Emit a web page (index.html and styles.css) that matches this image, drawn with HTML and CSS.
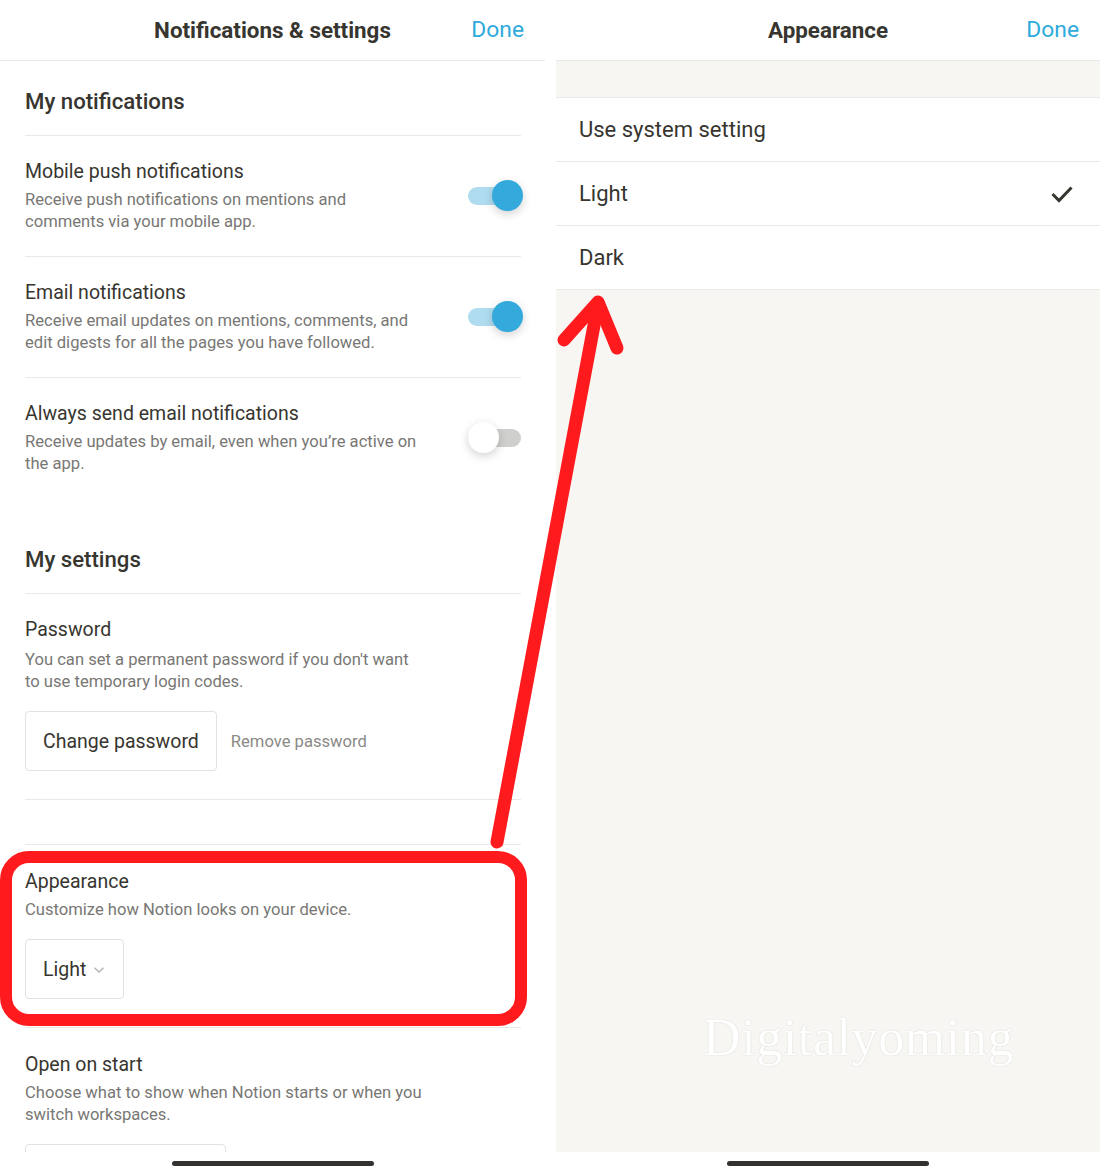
FILE: index.html
```html
<!DOCTYPE html>
<html lang="en">
<head>
<meta charset="utf-8">
<title>Notion settings</title>
<link rel="stylesheet" href="styles.css">
</head>
<body>
<div class="page">
  <section class="panel panel-left">
    <header class="bar">
      <div class="bar-title">Notifications &amp; settings</div>
      <div class="bar-done">Done</div>
    </header>
    <div class="content">
      <h2 class="group-head">My notifications</h2>
      <div class="item row">
        <div class="item-text">
          <div class="item-title">Mobile push notifications</div>
          <div class="item-desc">Receive push notifications on mentions and<br>comments via your mobile app.</div>
        </div>
        <div class="toggle on"><span class="knob"></span></div>
      </div>
      <div class="item row">
        <div class="item-text">
          <div class="item-title">Email notifications</div>
          <div class="item-desc">Receive email updates on mentions, comments, and<br>edit digests for all the pages you have followed.</div>
        </div>
        <div class="toggle on"><span class="knob"></span></div>
      </div>
      <div class="item row item-last">
        <div class="item-text">
          <div class="item-title">Always send email notifications</div>
          <div class="item-desc">Receive updates by email, even when you’re active on<br>the app.</div>
        </div>
        <div class="toggle off"><span class="knob"></span></div>
      </div>
      <h2 class="group-head">My settings</h2>
      <div class="item item-pw">
        <div class="item-title">Password</div>
        <div class="item-desc desc-pw">You can set a permanent password if you don't want<br>to use temporary login codes.</div>
        <div class="actions">
          <div class="btn">Change password</div>
          <div class="link">Remove password</div>
        </div>
      </div>
      <div class="item item-empty"></div>
      <div class="item item-ap">
        <div class="item-title">Appearance</div>
        <div class="item-desc">Customize how Notion looks on your device.</div>
        <div class="actions">
          <div class="btn btn-select">Light <svg class="chev" width="12" height="8" viewBox="0 0 12 8"><path d="M1.5 1.8 L6 6 L10.5 1.8" fill="none" stroke="#b4b4b0" stroke-width="1.4"/></svg></div>
        </div>
      </div>
      <div class="item item-open">
        <div class="item-title">Open on start</div>
        <div class="item-desc">Choose what to show when Notion starts or when you<br>switch workspaces.</div>
        <div class="actions">
          <div class="btn btn-wide"></div>
        </div>
      </div>
    </div>
    <div class="home"><span class="home-bar"></span></div>
  </section>

  <section class="panel panel-right">
    <header class="bar">
      <div class="bar-title">Appearance</div>
      <div class="bar-done">Done</div>
    </header>
    <div class="content content-grey">
      <div class="spacer"></div>
      <ul class="options">
        <li class="option">Use system setting</li>
        <li class="option">Light <svg class="check" width="24" height="20" viewBox="0 0 24 20"><path d="M2.5 10 L9 16.5 L21.5 3.5" fill="none" stroke="#37352f" stroke-width="3"/></svg></li>
        <li class="option">Dark</li>
      </ul>
      <div class="watermark">Digitalyoming</div>
    </div>
    <div class="home"><span class="home-bar"></span></div>
  </section>

  <svg class="annot" width="1100" height="1175" viewBox="0 0 1100 1175">
    <rect x="6" y="857" width="515" height="163" rx="23" ry="23" fill="none" stroke="#ff1a1d" stroke-width="12"/>
    <path d="M497 842 L598 304" fill="none" stroke="#ff1a1d" stroke-width="13" stroke-linecap="round"/>
    <path d="M564 340 L598 302 L617 348" fill="none" stroke="#ff1a1d" stroke-width="13" stroke-linecap="round" stroke-linejoin="round"/>
  </svg>
</div>
</body>
</html>
```

FILE: styles.css
```css
* { box-sizing: border-box; }
html, body { margin: 0; padding: 0; background: #fff; }
body {
  font-family: Roboto, "Noto Sans", "Liberation Sans", sans-serif;
  color: #37352f;
  width: 1100px;
  height: 1175px;
  overflow: hidden;
}
.page {
  position: relative;
  display: flex;
  gap: 11px;
  width: 1100px;
  height: 1175px;
}
.panel {
  display: flex;
  flex-direction: column;
  height: 1175px;
  background: #fff;
}
.panel-left { width: 545px; }
.panel-right { width: 544px; }

.bar {
  height: 61px;
  flex: none;
  display: flex;
  align-items: center;
  justify-content: center;
  position: relative;
  border-bottom: 1px solid #e9e9e7;
}
.bar-title {
  font-size: 22.4px;
  font-weight: 700;
  color: #37352f;
}
.bar-done {
  position: absolute;
  right: 21px;
  top: 16px;
  font-size: 22.8px;
  color: #2eaadc;
}
.content {
  flex: 1;
  overflow: hidden;
  padding: 0 24px 0 25px;
}
.group-head {
  margin: 0;
  padding: 27px 0 21px;
  font-size: 22.2px;
  line-height: 26px;
  font-weight: 500;
  border-bottom: 1px solid #e9e9e7;
}
.item {
  padding: 24px 0 23px;
  border-bottom: 1px solid #e9e9e7;
}
.row {
  display: flex;
  align-items: center;
  justify-content: space-between;
}
.item-last { border-bottom: none; padding-bottom: 44px; }
.item-title {
  font-size: 19.5px;
  line-height: 24px;
  color: #37352f;
}
.item-desc {
  margin-top: 5px;
  font-size: 16.6px;
  line-height: 22px;
  color: #787774;
}
.desc-pw { margin-top: 7px; }

.toggle {
  position: relative;
  flex: none;
  width: 53px;
  height: 18px;
  border-radius: 9px;
  margin-top: -2px;
}
.toggle.on { background: #afdcef; }
.toggle.off { background: #cfcfcd; }
.knob {
  position: absolute;
  top: 50%;
  width: 31px;
  height: 31px;
  margin-top: -15.5px;
  border-radius: 50%;
  box-shadow: 0 3px 10px rgba(0,0,0,0.18);
}
.toggle.on .knob { right: -2px; background: #34a9dc; }
.toggle.off .knob { left: 0; background: #fff; }

.actions {
  display: flex;
  align-items: center;
  gap: 14px;
  margin-top: 18px;
}
.btn {
  height: 60px;
  display: flex;
  align-items: center;
  padding: 0 17px;
  border: 1px solid #e3e2e0;
  border-radius: 4px;
  font-size: 19.5px;
  color: #37352f;
}
.link { font-size: 16.6px; color: #8a8986; }
.item-pw { padding-bottom: 28px; }
.item-empty { padding: 0; height: 45px; }
.item-ap { padding-top: 25px; padding-bottom: 28px; }
.item-open { padding-top: 25px; border-bottom: none; }
.btn-select { padding: 0 18px 0 17px; gap: 7px; }
.chev { margin-top: 2px; }
.btn-wide { width: 201px; }

.home {
  height: 23px;
  flex: none;
  display: flex;
  justify-content: center;
  padding-top: 9px;
  background: #fff;
}
.home-bar {
  width: 202px;
  height: 5px;
  border-radius: 3px;
  background: #333230;
}

.content-grey {
  background: #f7f6f3;
  padding: 0;
  position: relative;
}
.spacer { height: 37px; border-bottom: 1px solid #e9e9e7; }
.options { list-style: none; margin: 0; padding: 0; background: #fff; }
.option {
  height: 64px;
  border-bottom: 1px solid #e9e9e7;
  display: flex;
  align-items: center;
  justify-content: space-between;
  padding: 0 26px 0 23px;
  font-size: 22px;
  color: #37352f;
}
.watermark {
  position: absolute;
  left: 147px;
  top: 947px;
  font-family: "Liberation Serif", "DejaVu Serif", serif;
  font-size: 52px;
  color: #ffffff;
  text-shadow: 0 0 1px rgba(0,0,0,0.14), 0 0 2px rgba(0,0,0,0.06);
  letter-spacing: 0.6px;
}
.annot {
  position: absolute;
  left: 0;
  top: 0;
  pointer-events: none;
}
```
